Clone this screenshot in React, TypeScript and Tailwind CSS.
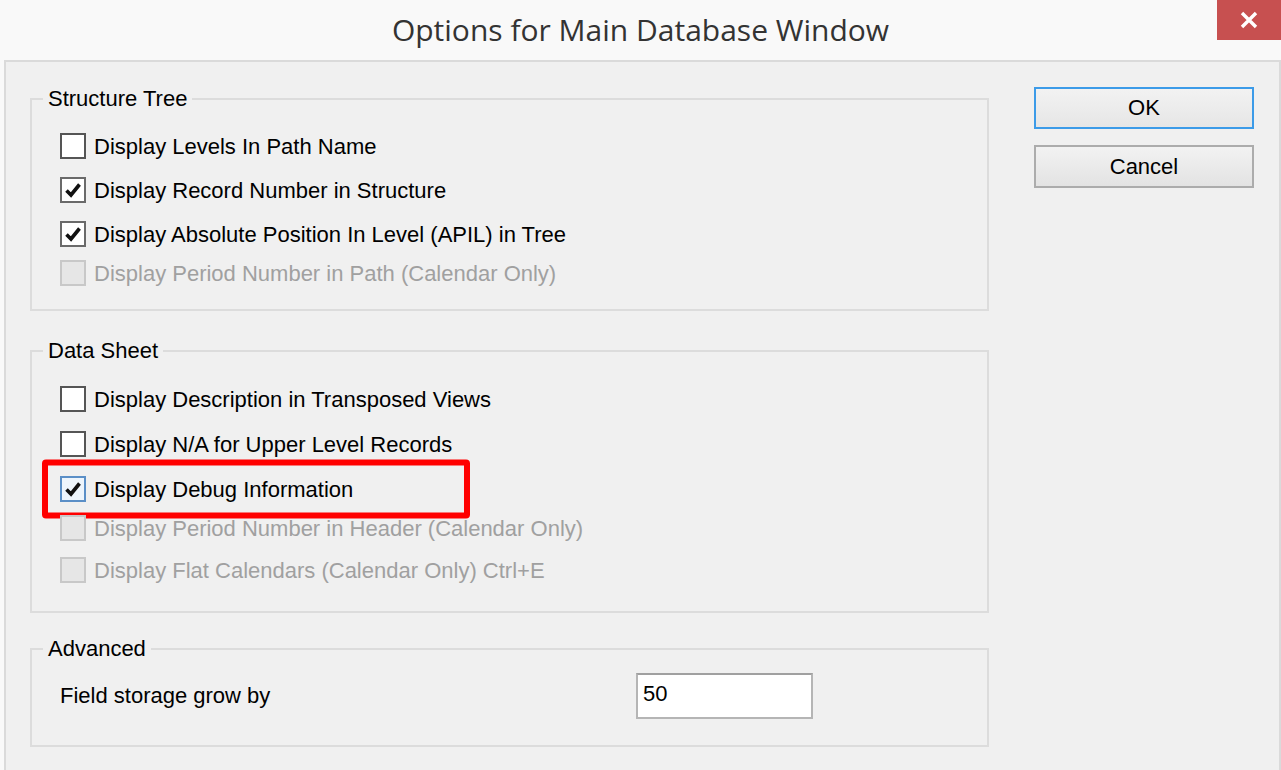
import type { FC } from 'react';

type BoxState = 'off' | 'on' | 'disabled';

interface OptionRow {
  label: string;
  state: BoxState;
  gap: string;
  highlight?: boolean;
  focused?: boolean;
}

const structureRows: OptionRow[] = [
  { label: 'Display Levels In Path Name', state: 'off', gap: 'mt-[19px]' },
  { label: 'Display Record Number in Structure', state: 'on', gap: 'mt-[14px]' },
  { label: 'Display Absolute Position In Level (APIL) in Tree', state: 'on', gap: 'mt-[14px]' },
  { label: 'Display Period Number in Path (Calendar Only)', state: 'disabled', gap: 'mt-[9px]' },
];

const dataSheetRows: OptionRow[] = [
  { label: 'Display Description in Transposed Views', state: 'off', gap: 'mt-[20px]' },
  { label: 'Display N/A for Upper Level Records', state: 'off', gap: 'mt-[15px]' },
  { label: 'Display Debug Information', state: 'on', gap: 'mt-[15px]', highlight: true, focused: true },
  { label: 'Display Period Number in Header (Calendar Only)', state: 'disabled', gap: 'mt-[9px]' },
  { label: 'Display Flat Calendars (Calendar Only) Ctrl+E', state: 'disabled', gap: 'mt-[12px]' },
];

const CheckBox: FC<{ state: BoxState; focused?: boolean }> = ({ state, focused }) => {
  const box =
    state === 'disabled'
      ? 'bg-[#e6e6e6] border-[#c8c8c8]'
      : focused
        ? 'bg-[#eef5fc] border-[#5b8fc7]'
        : state === 'on'
          ? 'bg-white border-[#6a6a6a]'
          : 'bg-white border-[#555555]';

  return (
    <span className={`w-[26px] h-[26px] shrink-0 border-2 flex items-center justify-center ${box}`}>
      {state === 'on' && (
        <svg width="20" height="20" viewBox="0 0 20 20">
          <path d="M3.5 10.5 L8 15 L16.5 4.5" fill="none" stroke="#111" strokeWidth="3.6" strokeLinejoin="miter" />
        </svg>
      )}
    </span>
  );
};

const Row: FC<{ row: OptionRow }> = ({ row }) => (
  <div className={`relative flex items-center gap-[8px] h-[30px] ${row.gap}`}>
    {row.highlight && (
      <span className="absolute -left-[18px] top-1/2 -translate-y-1/2 w-[428px] h-[59px] border-[6px] border-[#ff0000] rounded-[4px]" />
    )}
    <CheckBox state={row.state} focused={row.focused} />
    <span className={`whitespace-nowrap ${row.state === 'disabled' ? 'text-[#a0a0a0]' : 'text-black'}`}>
      {row.label}
    </span>
  </div>
);

const Group: FC<{ title: string; height: string; className?: string; children: React.ReactNode }> = ({
  title,
  height,
  className = '',
  children,
}) => (
  <fieldset className={`border-2 border-[#dcdcdc] ${height} ${className}`}>
    <legend className="ml-[11px] px-[5px] leading-[26px]">{title}</legend>
    <div className="pl-[28px] flex flex-col">{children}</div>
  </fieldset>
);

export default function App() {
  return (
    <div className="w-[1281px] h-[770px] overflow-hidden bg-[#f9f9f9] flex flex-col font-['Liberation_Sans',Arial,sans-serif] text-[22px] text-black">
      {/* Title bar */}
      <div className="h-[60px] shrink-0 grid grid-cols-[64px_1fr_64px]">
        <div />
        <div className="flex items-center justify-center pb-[2px] font-['Open_Sans','Noto_Sans',sans-serif] text-[30px] text-[#333333]">
          Options for Main Database Window
        </div>
        <div className="h-[40px] bg-[#c75050] flex items-center justify-center">
          <svg width="18" height="18" viewBox="0 0 18 18">
            <path d="M2 2 L16 16 M16 2 L2 16" stroke="#fff" strokeWidth="3.4" />
          </svg>
        </div>
      </div>

      {/* Client area */}
      <div className="flex-1 ml-[4px] border-2 border-b-0 border-[#dadada] bg-[#f0f0f0] flex pl-[24px]">
        <div className="w-[959px] pt-[24px] flex flex-col">
          <Group title="Structure Tree" height="h-[225px]">
            {structureRows.map((r) => (
              <Row key={r.label} row={r} />
            ))}
          </Group>

          <Group title="Data Sheet" height="h-[275px]" className="mt-[27px]">
            {dataSheetRows.map((r) => (
              <Row key={r.label} row={r} />
            ))}
          </Group>

          <Group title="Advanced" height="h-[111px]" className="mt-[23px]">
            <div className="mt-[11px] flex items-center h-[46px]">
              <span className="w-[576px] pb-[2px]">Field storage grow by</span>
              <div className="w-[177px] h-[46px] bg-white border-2 border-[#b5b5b5] border-t-[#a0a0a0] pl-[5px] pt-[6px] leading-[26px]">
                50
              </div>
            </div>
          </Group>
        </div>

        {/* Buttons */}
        <div className="ml-[45px] pt-[25px] flex flex-col gap-[16px]">
          <button className="w-[220px] h-[42px] border-2 border-[#3c9be8] bg-gradient-to-b from-[#f2f2f2] to-[#e6e6e6] leading-none">
            OK
          </button>
          <button className="w-[220px] h-[43px] border-2 border-[#acacac] bg-gradient-to-b from-[#f2f2f2] to-[#e3e3e3] leading-none">
            Cancel
          </button>
        </div>
      </div>
    </div>
  );
}
